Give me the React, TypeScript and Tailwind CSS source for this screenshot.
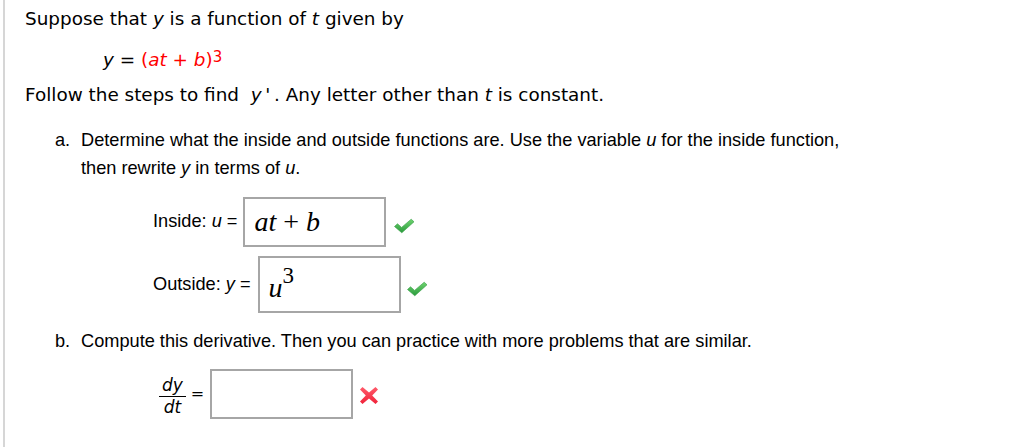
import React from 'react';

const verdana = { fontFamily: '"DejaVu Sans", Verdana, sans-serif' };
const arial = { fontFamily: '"Liberation Sans", Arial, sans-serif' };
const serif = { fontFamily: '"Liberation Serif", "Times New Roman", serif' };

const Check = () => (
  <svg width="22" height="16" viewBox="0 0 22 16" className="shrink-0">
    <defs>
      <linearGradient id="chk" x1="0" y1="0" x2="0" y2="1">
        <stop offset="0" stopColor="#6fd46f" />
        <stop offset="1" stopColor="#2a9a3c" />
      </linearGradient>
    </defs>
    <path
      d="M1.5 8.5 L4.5 5.8 L8.6 9.4 L18.2 1.2 L21 3.8 L8.8 14.8 Z"
      fill="url(#chk)"
      stroke="#2f9a40"
      strokeWidth="0.6"
      strokeLinejoin="round"
    />
  </svg>
);

const Cross = () => (
  <svg width="20" height="19" viewBox="0 0 20 19" className="shrink-0">
    <defs>
      <linearGradient id="crs" x1="0" y1="0" x2="0" y2="1">
        <stop offset="0" stopColor="#ff5a6a" />
        <stop offset="1" stopColor="#f0223a" />
      </linearGradient>
    </defs>
    <path
      d="M3.5 1 L10 6.4 L16.5 1 L19 3.6 L13.2 9.5 L19 15.4 L16.5 18 L10 12.6 L3.5 18 L1 15.4 L6.8 9.5 L1 3.6 Z"
      fill="url(#crs)"
      strokeLinejoin="round"
    />
  </svg>
);

const AnswerBox = ({ children, h }: { children?: React.ReactNode; h: string }) => (
  <div className={`w-[143px] ${h} border-2 border-[#a6a6a6] bg-white flex items-center pl-[9px] shrink-0`}>
    {children}
  </div>
);

export default function App() {
  return (
    <div className="w-[1024px] h-[447px] bg-white text-black overflow-hidden pl-[3px]">
      <div className="h-full border-l-2 border-[#d6d6d6] pl-[20px] pt-[7px]">
        <p className="text-[18.4px] leading-[24px]" style={verdana}>
          Suppose that <i>y</i> is a function of <i>t</i> given by
        </p>
        <p className="mt-[17px] ml-[78px] text-[18.4px] leading-[24px]" style={verdana}>
          <i>y</i> = <span className="text-[#ff0000]">(<i>at</i> + <i>b</i>)<sup className="text-[15px] relative -top-[4px]">3</sup></span>
        </p>
        <p className="mt-[11px] text-[18.4px] leading-[24px]" style={verdana}>
          Follow the steps to find&nbsp; <i>y</i>&thinsp;'&thinsp;. Any letter other than <i>t</i> is constant.
        </p>

        <div className="mt-[19px] ml-[30px]" style={arial}>
          <div className="flex text-[18.2px] leading-[28px]">
            <span className="w-[26px] shrink-0">a.</span>
            <div>
              <p>
                Determine what the inside and outside functions are. Use the variable <i>u</i> for the inside function,
              </p>
              <p>
                then rewrite <i>y</i> in terms of <i>u</i>.
              </p>
            </div>
          </div>

          <div className="mt-[15px] ml-[98px] flex items-center text-[18.2px]">
            <span className="mr-[6px]">
              Inside: <i>u</i> =
            </span>
            <AnswerBox h="h-[50px]">
              <span className="text-[28px] italic" style={serif}>
                at <span className="not-italic">+</span> b
              </span>
            </AnswerBox>
            <span className="ml-[7px] mt-[7px]">
              <Check />
            </span>
          </div>

          <div className="mt-[9px] ml-[98px] flex items-center text-[18.2px]">
            <span className="mr-[7px]">
              Outside: <i>y</i> =
            </span>
            <AnswerBox h="h-[57px]">
              <span className="mt-[6px]" style={serif}>
                <i className="text-[28px]">u</i>
                <sup className="text-[23px] relative -top-[14px]">3</sup>
              </span>
            </AnswerBox>
            <span className="ml-[5px] mt-[9px]">
              <Check />
            </span>
          </div>

          <div className="mt-[14px] flex text-[18.2px] leading-[28px]">
            <span className="w-[26px] shrink-0">b.</span>
            <p>Compute this derivative. Then you can practice with more problems that are similar.</p>
          </div>

          <div className="mt-[14px] ml-[104px] flex items-center">
            <div className="flex items-center mr-[6px]" style={verdana}>
              <div className="flex flex-col items-center text-[17px] leading-[17px] mt-[4px]">
                <i className="px-[3px]">dy</i>
                <span className="block w-full h-px bg-black my-[2px]" />
                <i className="px-[3px]">dt</i>
              </div>
              <span className="ml-[5px] text-[16px] leading-[16px]">=</span>
            </div>
            <AnswerBox h="h-[50px]" />
            <span className="ml-[6px] mt-[3px]">
              <Cross />
            </span>
          </div>
        </div>
      </div>
    </div>
  );
}
